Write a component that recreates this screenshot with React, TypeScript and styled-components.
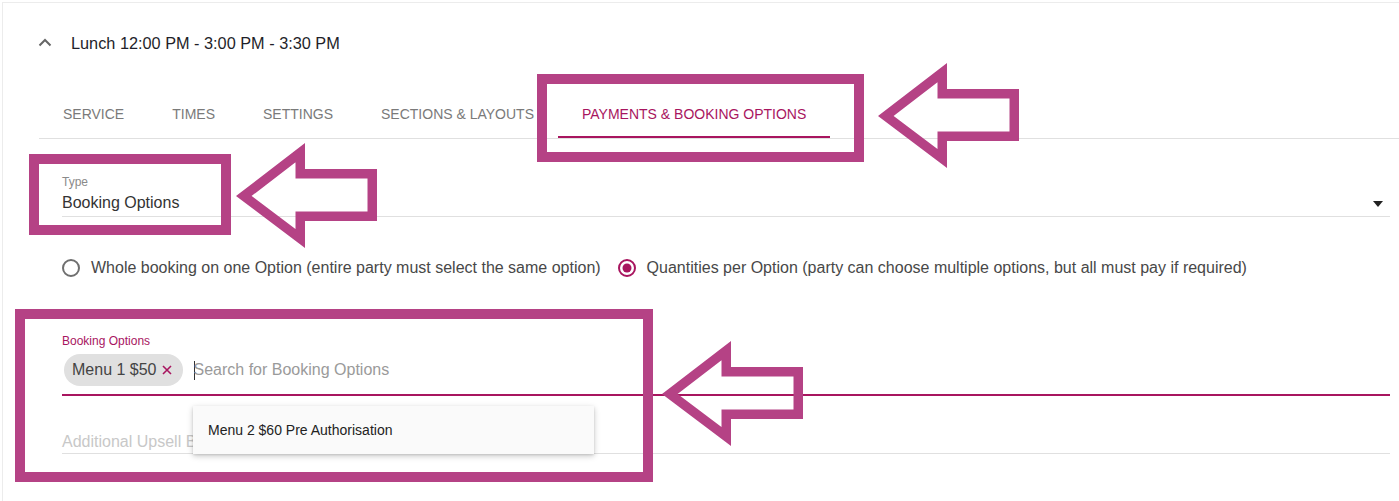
import styled, { createGlobalStyle } from "styled-components";

const accent = "#a8155f";
const marker = "#b54285";

const GlobalStyle = createGlobalStyle`
  html, body {
    margin: 0;
    padding: 0;
    background: #ffffff;
    font-family: "Liberation Sans", Arial, sans-serif;
  }
`;

const Page = styled.div`
  position: relative;
  width: 1399px;
  height: 501px;
  overflow: hidden;
  padding: 2px 0 0 2px;
  box-sizing: border-box;
`;

const Card = styled.div`
  border-top: 1px solid #ececec;
  border-left: 1px solid #ececec;
  min-height: 520px;
`;

const Header = styled.div`
  display: flex;
  align-items: center;
  gap: 14px;
  height: 48px;
  margin-top: 16px;
  padding-left: 30px;
`;

const Title = styled.span`
  font-size: 16.3px;
  color: #1f1f2a;
`;

const TabList = styled.div`
  display: flex;
  margin: 23px 0 0 36px;
  border-bottom: 1px solid #e0e0e0;
`;

const Tab = styled.div<{ $active?: boolean }>`
  display: flex;
  align-items: center;
  height: 48px;
  padding: 2px 24px 0;
  box-sizing: border-box;
  font-size: 14px;
  text-transform: uppercase;
  color: ${(p) => (p.$active ? accent : "#7a7a7a")};
  border-bottom: 2px solid ${(p) => (p.$active ? accent : "transparent")};
`;

const Form = styled.div`
  padding: 0 9px 0 59px;
`;

const FieldLabel = styled.div<{ $focused?: boolean }>`
  font-size: 12px;
  line-height: 16px;
  color: ${(p) => (p.$focused ? accent : "#8a8a8a")};
`;

const SelectField = styled.div`
  margin-top: 35px;
`;

const SelectValue = styled.div`
  display: flex;
  align-items: center;
  justify-content: space-between;
  height: 26px;
  padding-right: 7px;
  font-size: 16px;
  color: #333;
  border-bottom: 1px solid #e0e0e0;
`;

const DropTriangle = styled.span`
  width: 0;
  height: 0;
  border-left: 5.5px solid transparent;
  border-right: 5.5px solid transparent;
  border-top: 6px solid #222;
  margin-top: 2px;
`;

const RadioGroup = styled.div`
  display: flex;
  align-items: center;
  margin-top: 41px;
  margin-left: -1px;
  height: 20px;
`;

const RadioOption = styled.label`
  display: flex;
  align-items: center;
  gap: 10px;
  margin-right: 16px;
  font-size: 16px;
  color: #484848;
  white-space: nowrap;
`;

const ChipField = styled.div`
  position: relative;
  margin-top: 55px;
`;

const ChipInputRow = styled.div`
  display: flex;
  align-items: center;
  gap: 11px;
  padding: 5px 0 8px 2px;
  border-bottom: 2px solid ${accent};
`;

const Chip = styled.span`
  display: inline-flex;
  align-items: center;
  gap: 5px;
  height: 32px;
  padding: 0 11px 0 8px;
  border-radius: 16px;
  background: #e0e0e0;
  font-size: 16px;
  color: #444;
`;

const SearchBox = styled.div`
  display: flex;
  align-items: center;
  flex: 1;
`;

const CaretMark = styled.span`
  width: 1px;
  height: 19px;
  background: #333;
  margin-right: -1px;
`;

const SearchInput = styled.input`
  flex: 1;
  border: none;
  outline: none;
  padding: 0;
  font-family: inherit;
  font-size: 16px;
  color: #333;
  background: transparent;
  &::placeholder {
    color: #9a9a9a;
  }
`;

const Menu = styled.div`
  position: absolute;
  top: calc(100% + 10px);
  left: 131px;
  width: 401px;
  background: #fafafa;
  box-shadow: 0 2px 6px rgba(0, 0, 0, 0.22), 0 1px 2px rgba(0, 0, 0, 0.1);
  z-index: 2;
`;

const MenuItem = styled.div`
  height: 48px;
  display: flex;
  align-items: center;
  padding-left: 15px;
  font-size: 14px;
  color: #222;
`;

const PlainField = styled.div`
  margin-top: 35px;
  height: 22px;
  line-height: 22px;
  font-size: 16px;
  color: #c8c8c8;
  border-bottom: 1px solid #e0e0e0;
`;

const Overlay = styled.svg`
  position: absolute;
  left: 0;
  top: 0;
  pointer-events: none;
`;

const tabs = [
  "Service",
  "Times",
  "Settings",
  "Sections & Layouts",
  "Payments & Booking Options",
];

const Chevron = () => (
  <svg width="24" height="24" viewBox="0 0 24 24">
    <polyline
      points="6.5,14.5 12,9 17.5,14.5"
      fill="none"
      stroke="#666"
      strokeWidth="2"
    />
  </svg>
);

const Radio = ({ checked }: { checked?: boolean }) => (
  <svg width="20" height="20" viewBox="0 0 20 20">
    <circle
      cx="10"
      cy="10"
      r="8"
      fill="none"
      stroke={checked ? accent : "#6f6f6f"}
      strokeWidth="2"
    />
    {checked && <circle cx="10" cy="10" r="4.5" fill={accent} />}
  </svg>
);

const ChipX = () => (
  <svg width="10" height="10" viewBox="0 0 10 10">
    <path d="M1 1L9 9M9 1L1 9" stroke={accent} strokeWidth="1.6" />
  </svg>
);

// hollow arrow pointing left, tip at (x, y)
const arrowPoints = (x: number, y: number) =>
  [
    [x, y],
    [x + 69, y - 53],
    [x + 69, y - 27],
    [x + 141, y - 27],
    [x + 141, y + 25],
    [x + 69, y + 25],
    [x + 69, y + 52],
  ]
    .map((p) => p.join(","))
    .join(" ");

const boxes = [
  { x: 537, y: 74, w: 327, h: 88 },
  { x: 29, y: 154, w: 202, h: 81 },
  { x: 15, y: 309, w: 638, h: 173 },
];

const arrows = [
  [878, 116],
  [236, 196],
  [662, 394],
];

const Annotations = () => (
  <Overlay width="1399" height="501" viewBox="0 0 1399 501">
    <defs>
      {arrows.map(([x, y], i) => (
        <clipPath id={`arrow-${i}`} key={i}>
          <polygon points={arrowPoints(x, y)} />
        </clipPath>
      ))}
    </defs>
    {boxes.map((b, i) => (
      <rect
        key={i}
        x={b.x + 5}
        y={b.y + 5}
        width={b.w - 10}
        height={b.h - 10}
        fill="none"
        stroke={marker}
        strokeWidth="10"
      />
    ))}
    {arrows.map(([x, y], i) => (
      <polygon
        key={i}
        points={arrowPoints(x, y)}
        fill="none"
        stroke={marker}
        strokeWidth="19"
        strokeLinejoin="miter"
        strokeMiterlimit="10"
        clipPath={`url(#arrow-${i})`}
      />
    ))}
  </Overlay>
);

const App = () => {
  return (
    <>
      <GlobalStyle />
      <Page>
        <Card>
          <Header>
            <Chevron />
            <Title>Lunch 12:00 PM - 3:00 PM - 3:30 PM</Title>
          </Header>
          <TabList>
            {tabs.map((t, i) => (
              <Tab key={t} $active={i === tabs.length - 1}>
                {t}
              </Tab>
            ))}
          </TabList>
          <Form>
            <SelectField>
              <FieldLabel>Type</FieldLabel>
              <SelectValue>
                Booking Options
                <DropTriangle />
              </SelectValue>
            </SelectField>
            <RadioGroup>
              <RadioOption>
                <Radio />
                Whole booking on one Option (entire party must select the same
                option)
              </RadioOption>
              <RadioOption>
                <Radio checked />
                Quantities per Option (party can choose multiple options, but
                all must pay if required)
              </RadioOption>
            </RadioGroup>
            <ChipField>
              <FieldLabel $focused>Booking Options</FieldLabel>
              <ChipInputRow>
                <Chip>
                  Menu 1 $50
                  <ChipX />
                </Chip>
                <SearchBox>
                  <CaretMark />
                  <SearchInput placeholder="Search for Booking Options" />
                </SearchBox>
              </ChipInputRow>
              <Menu>
                <MenuItem>Menu 2 $60 Pre Authorisation</MenuItem>
              </Menu>
            </ChipField>
            <PlainField>Additional Upsell Booking Options</PlainField>
          </Form>
        </Card>
        <Annotations />
      </Page>
    </>
  );
};

export default App;
